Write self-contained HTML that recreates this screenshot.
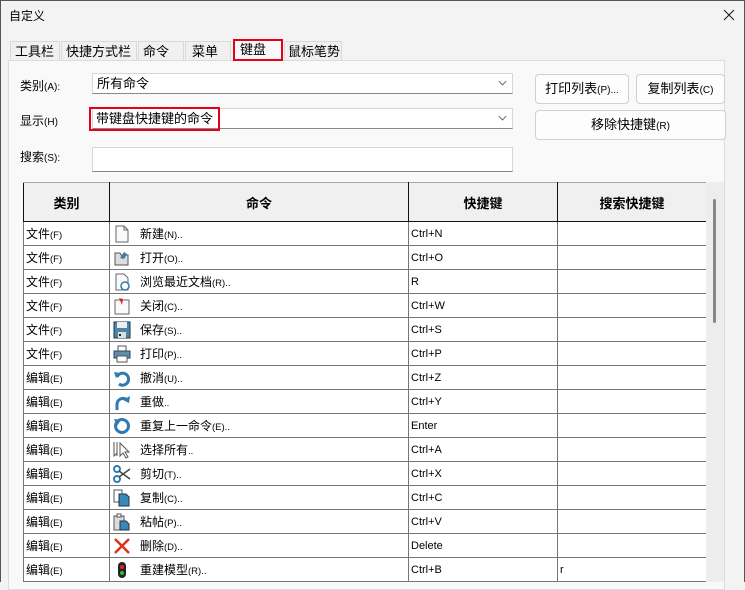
<!DOCTYPE html>
<html><head><meta charset="utf-8"><style>
*{margin:0;padding:0;box-sizing:border-box}
body{width:745px;height:582px;overflow:hidden;background:#f3f3f3;font-family:"Liberation Sans","Microsoft YaHei","Noto Sans CJK SC",sans-serif;font-size:12px;color:#000;position:relative}
.abs{position:absolute}
.frame{left:0;top:0;width:745px;height:582px;border:1px solid #555;border-bottom:none}
.title{left:9px;top:7px;font-size:12px}
.close{left:723px;top:9px}
.tab{position:absolute;top:0;height:19px;background:#f0f0f0;border:1px solid #d9d9d9;border-bottom:none;font-size:13px;line-height:19px;padding-left:4px}
.panel{left:8px;top:60px;width:717px;height:530px;background:#f9f9f9;border:1px solid #dcdcdc}
.lbl{font-size:12px}
.lbl small{font-size:10px}
.combo{height:21px;background:#fff;border:1px solid #d6d6d6;border-bottom:1px solid #888;font-size:13px;line-height:19px;padding-left:4px}
.chev{position:absolute;right:6px;top:4px;width:7px;height:7px;border-right:1px solid #555;border-bottom:1px solid #555;transform:rotate(45deg) scale(.8)}
.btn{height:30px;background:#fdfdfd;border:1px solid #d0d0d0;border-radius:4px;text-align:center;line-height:28px;font-size:13px}
.btn small{font-size:10px}
.red{border:2px solid #e3001b}
table{position:absolute;left:23px;top:182px;border-collapse:collapse;background:#fff;table-layout:fixed}
td,th{border:1px solid #777;height:24px;font-size:12px;padding:0 2px;white-space:nowrap;overflow:hidden}
th{height:39px;background:#f0f0f0;font-weight:bold;font-size:13px;border:1px solid #111;border-top:1px solid #aaa}
td small{font-size:9.5px}
td.c{padding-left:3px}
td.c svg{vertical-align:middle;margin-right:9px}
td.k{font-size:11px}
td.c span{vertical-align:middle;font-size:12px}
.sb{left:706px;top:182px;width:18px;height:400px;background:#ededed}
.thumb{left:713px;top:199px;width:3px;height:124px;background:#888;border-radius:2px}
</style></head><body>
<div class="abs frame"></div>
<div class="abs title">自定义</div>
<svg class="abs close" width="12" height="12" viewBox="0 0 12 12"><path d="M1 1l10 10M11 1L1 11" stroke="#222" stroke-width="1.1"/></svg>
<div class="abs panel"></div>
<div class="abs tab" style="left:10px;top:41px;width:50px">工具栏</div>
<div class="abs tab" style="left:61px;top:41px;width:76px">快捷方式栏</div>
<div class="abs tab" style="left:138px;top:41px;width:46px">命令</div>
<div class="abs tab" style="left:185px;top:41px;width:46px;padding-left:6px">菜单</div>
<div class="abs tab red" style="left:233px;top:39px;width:50px;height:22px;background:#f9f9f9;line-height:17px;padding-left:5px">键盘</div>
<div class="abs tab" style="left:284px;top:41px;width:58px;padding-left:3px">鼠标笔势</div>

<div class="abs lbl" style="left:20px;top:77px">类别<small>(A):</small></div>
<div class="abs lbl" style="left:20px;top:112px">显示<small>(H)</small></div>
<div class="abs lbl" style="left:20px;top:148px">搜索<small>(S):</small></div>
<div class="abs combo" style="left:92px;top:73px;width:421px">所有命令<div class="chev"></div></div>
<div class="abs combo" style="left:92px;top:108px;width:421px"><div class="chev"></div></div>
<div class="abs red" style="left:89px;top:107px;width:131px;height:24px;font-size:13px;line-height:19px;padding-left:5px">带键盘快捷键的命令</div>
<div class="abs combo" style="left:92px;top:147px;width:421px;height:25px"></div>
<div class="abs btn" style="left:535px;top:74px;width:94px">打印列表<small>(P)...</small></div>
<div class="abs btn" style="left:636px;top:74px;width:89px">复制列表<small>(C)</small></div>
<div class="abs btn" style="left:535px;top:110px;width:191px">移除快捷键<small>(R)</small></div>

<table>
<colgroup><col style="width:86px"><col style="width:299px"><col style="width:149px"><col style="width:149px"></colgroup>
<tr><th>类别</th><th>命令</th><th>快捷键</th><th>搜索快捷键</th></tr>
<tr><td>文件<small>(F)</small></td><td class="c"><svg width="18" height="18" viewBox="0 0 18 18"><path d="M3 1h8l4 4v12H3z" fill="#fafafa" stroke="#666"/><path d="M11 1v4h4" fill="none" stroke="#666"/></svg><span>新建<small>(N)..</small></span></td><td class="k">Ctrl+N</td><td></td></tr>
<tr><td>文件<small>(F)</small></td><td class="c"><svg width="18" height="18" viewBox="0 0 18 18"><path d="M2 4h5l1 2h7v10H2z" fill="#ddd" stroke="#555"/><path d="M7 9l4-6 3 2-3 5z" fill="#3a7ea6"/></svg><span>打开<small>(O)..</small></span></td><td class="k">Ctrl+O</td><td></td></tr>
<tr><td>文件<small>(F)</small></td><td class="c"><svg width="18" height="18" viewBox="0 0 18 18"><path d="M3 1h8l4 4v12H3z" fill="#fafafa" stroke="#666"/><circle cx="12" cy="13" r="4" fill="#fff" stroke="#2f7bb0" stroke-width="1.5"/></svg><span>浏览最近文档<small>(R)..</small></span></td><td class="k">R</td><td></td></tr>
<tr><td>文件<small>(F)</small></td><td class="c"><svg width="18" height="18" viewBox="0 0 18 18"><path d="M2 3h14v14H2z" fill="#fafafa" stroke="#666"/><path d="M6 1l4 1-1 6z" fill="#d22"/></svg><span>关闭<small>(C)..</small></span></td><td class="k">Ctrl+W</td><td></td></tr>
<tr><td>文件<small>(F)</small></td><td class="c"><svg width="18" height="18" viewBox="0 0 18 18"><path d="M1 1h16v16H1z" fill="#4a87a8" stroke="#234"/><path d="M4 1h10v6H4z" fill="#eee"/><path d="M5 11h8v6H5z" fill="#ddd"/><rect x="6" y="13" width="2" height="2" fill="#222"/></svg><span>保存<small>(S)..</small></span></td><td class="k">Ctrl+S</td><td></td></tr>
<tr><td>文件<small>(F)</small></td><td class="c"><svg width="18" height="18" viewBox="0 0 18 18"><path d="M5 1h8v5H5z" fill="#fff" stroke="#555"/><path d="M1 6h16v7H1z" fill="#5a8fb0" stroke="#345"/><path d="M4 11h10v6H4z" fill="#fff" stroke="#555"/></svg><span>打印<small>(P)..</small></span></td><td class="k">Ctrl+P</td><td></td></tr>
<tr><td>编辑<small>(E)</small></td><td class="c"><svg width="18" height="18" viewBox="0 0 18 18"><path d="M4 8a6 6 0 1 1 2 7" fill="none" stroke="#2f7bb0" stroke-width="3"/><path d="M1 3l6 1-4 5z" fill="#2f7bb0"/></svg><span>撤消<small>(U)..</small></span></td><td class="k">Ctrl+Z</td><td></td></tr>
<tr><td>编辑<small>(E)</small></td><td class="c"><svg width="18" height="18" viewBox="0 0 18 18"><path d="M4 17V11a6 6 0 0 1 10-4" fill="none" stroke="#2f7bb0" stroke-width="3"/><path d="M17 3l-1 7-6-3z" fill="#2f7bb0"/></svg><span>重做<small>..</small></span></td><td class="k">Ctrl+Y</td><td></td></tr>
<tr><td>编辑<small>(E)</small></td><td class="c"><svg width="18" height="18" viewBox="0 0 18 18"><circle cx="9" cy="9" r="6.5" fill="none" stroke="#2f7bb0" stroke-width="3"/><path d="M1 2l7 1-4 6z" fill="#2f7bb0"/></svg><span>重复上一命令<small>(E)..</small></span></td><td class="k">Enter</td><td></td></tr>
<tr><td>编辑<small>(E)</small></td><td class="c"><svg width="18" height="18" viewBox="0 0 18 18"><path d="M1 1v14l3-3M4 1v14M7 2v13l3-3 3 5 2-1-3-5h4z" fill="#fff" stroke="#555"/></svg><span>选择所有<small>..</small></span></td><td class="k">Ctrl+A</td><td></td></tr>
<tr><td>编辑<small>(E)</small></td><td class="c"><svg width="18" height="18" viewBox="0 0 18 18"><circle cx="4" cy="4" r="3" fill="none" stroke="#2f7bb0" stroke-width="2"/><circle cx="4" cy="14" r="3" fill="none" stroke="#2f7bb0" stroke-width="2"/><path d="M6 6l11 8M6 12l11-8" stroke="#444" stroke-width="1.5"/></svg><span>剪切<small>(T)..</small></span></td><td class="k">Ctrl+X</td><td></td></tr>
<tr><td>编辑<small>(E)</small></td><td class="c"><svg width="18" height="18" viewBox="0 0 18 18"><path d="M1 1h8v12H1z" fill="#fff" stroke="#555"/><path d="M6 5h7l3 3v9H6z" fill="#3a88b8" stroke="#234"/></svg><span>复制<small>(C)..</small></span></td><td class="k">Ctrl+C</td><td></td></tr>
<tr><td>编辑<small>(E)</small></td><td class="c"><svg width="18" height="18" viewBox="0 0 18 18"><path d="M1 3h10v14H1z" fill="#ddd" stroke="#555"/><path d="M4 1h4v3H4z" fill="#fff" stroke="#555"/><path d="M7 8h6l3 3v6H7z" fill="#3a88b8" stroke="#234"/></svg><span>粘帖<small>(P)..</small></span></td><td class="k">Ctrl+V</td><td></td></tr>
<tr><td>编辑<small>(E)</small></td><td class="c"><svg width="18" height="18" viewBox="0 0 18 18"><path d="M2 2l14 14M16 2L2 16" stroke="#e03020" stroke-width="2.5"/></svg><span>删除<small>(D)..</small></span></td><td class="k">Delete</td><td></td></tr>
<tr><td>编辑<small>(E)</small></td><td class="c"><svg width="18" height="18" viewBox="0 0 18 18"><rect x="5" y="1" width="8" height="16" rx="4" fill="#222"/><circle cx="9" cy="6" r="2" fill="#e22"/><circle cx="9" cy="12" r="2" fill="#3b3"/></svg><span>重建模型<small>(R)..</small></span></td><td class="k">Ctrl+B</td><td class="k">r</td></tr>
</table>
<div class="abs sb"></div>
<div class="abs thumb"></div>
</body></html>
